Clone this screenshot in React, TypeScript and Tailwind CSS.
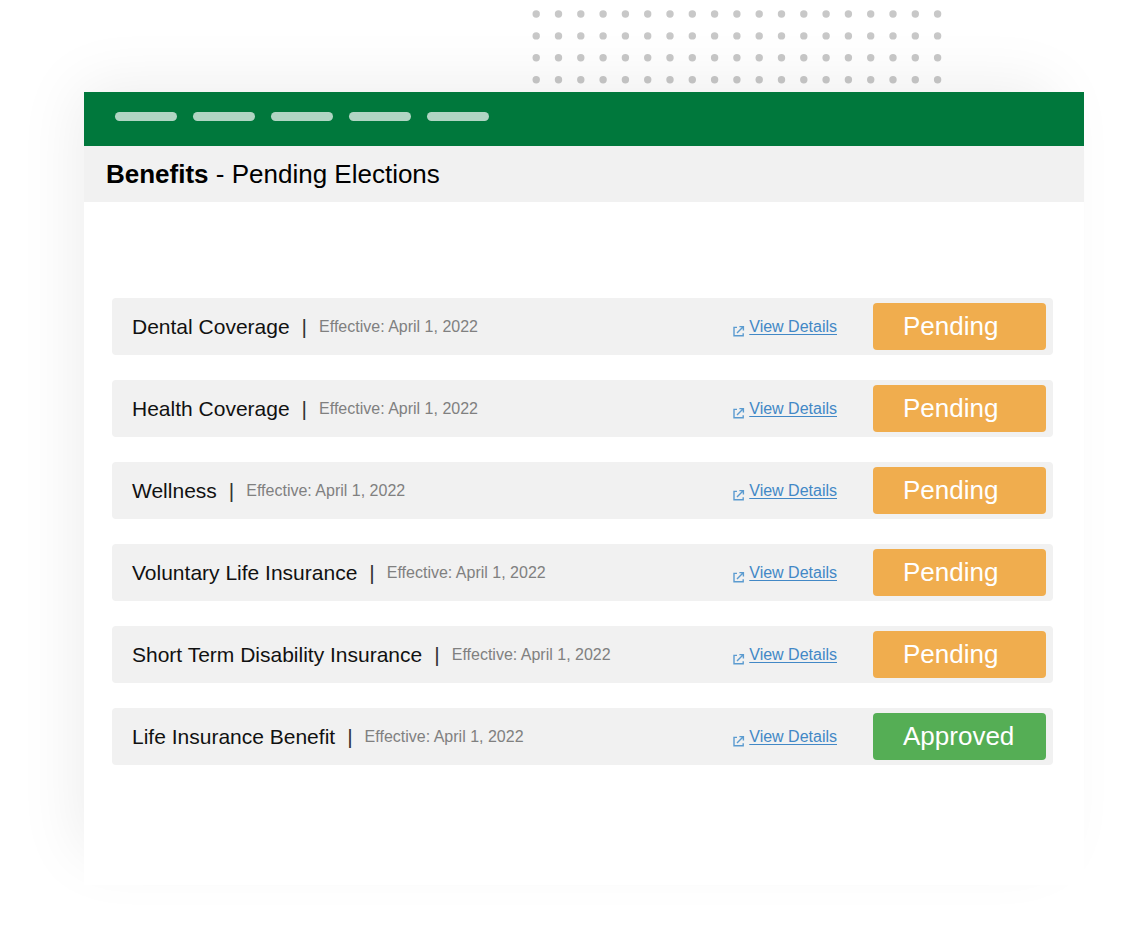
import React from "react";
import clsx from "clsx";

type Election = {
  name: string;
  effective: string;
  status: "Pending" | "Approved";
};

const elections: Election[] = [
  { name: "Dental Coverage", effective: "April 1, 2022", status: "Pending" },
  { name: "Health Coverage", effective: "April 1, 2022", status: "Pending" },
  { name: "Wellness", effective: "April 1, 2022", status: "Pending" },
  { name: "Voluntary Life Insurance", effective: "April 1, 2022", status: "Pending" },
  { name: "Short Term Disability Insurance", effective: "April 1, 2022", status: "Pending" },
  { name: "Life Insurance Benefit", effective: "April 1, 2022", status: "Approved" },
];

const DotGrid = () => (
  <svg width="412" height="92" className="absolute left-[530px] top-0" aria-hidden="true">
    {Array.from({ length: 4 }).map((_, row) =>
      Array.from({ length: 19 }).map((_, col) => (
        <circle
          key={`${row}-${col}`}
          cx={6.2 + col * 22.3}
          cy={14 + row * 21.9}
          r={3.7}
          fill="#c8c8c8"
        />
      ))
    )}
  </svg>
);

const ExternalIcon = () => (
  <svg
    width="12"
    height="12"
    viewBox="0 0 12 12"
    fill="none"
    stroke="#5b9bd0"
    strokeWidth="1.4"
    className="mt-2"
    aria-hidden="true"
  >
    <path d="M4 2.4H1v8.4h9.2V8.2" />
    <path d="M6.4 1.6h4v4M10.2 1.8L4 8" />
  </svg>
);

const ElectionRow = ({ name, effective, status }: Election) => (
  <li className="flex h-[57px] items-center rounded-[4px] bg-[#f1f1f1] pl-5 pr-[7px]">
    <h2 className="text-[21px] text-[#111]">{name}</h2>
    <span className="ml-3 text-[21px] text-[#333]">|</span>
    <p className="ml-3 text-base text-[#808080]">Effective: {effective}</p>
    <a
      href="#details"
      className="ml-auto flex items-center gap-1 text-base text-[#4288c6]"
    >
      <ExternalIcon />
      <span className="underline underline-offset-2">View Details</span>
    </a>
    <div
      className={clsx(
        "ml-9 flex h-[47px] w-[173px] items-center rounded-[4px] pl-[30px] text-[26px] text-white",
        status === "Approved" ? "bg-[#55ae55]" : "bg-[#f0ad4e]"
      )}
    >
      {status}
    </div>
  </li>
);

const App = () => {
  return (
    <div className="relative overflow-hidden bg-white pb-14 pl-[84px] pr-[52px] pt-[92px] font-['Liberation_Sans',Arial,sans-serif]">
      <DotGrid />
      <main className="relative bg-white pb-[120px] shadow-[-18px_-18px_60px_-14px_rgba(0,0,0,0.08)]">
        <div className="flex h-[54px] gap-4 bg-[#00783c] pl-[31px] pt-5">
          {Array.from({ length: 5 }).map((_, i) => (
            <span key={i} className="h-[9px] w-[62px] rounded-full bg-[#b0d5c3]" />
          ))}
        </div>
        <h1 className="flex h-14 items-center whitespace-pre bg-[#f1f1f1] pl-[22px] text-[26px] text-black">
          <b>Benefits</b> - Pending Elections
        </h1>
        <ul className="mt-24 flex flex-col gap-[25px] pl-7 pr-[31px]">
          {elections.map((election) => (
            <ElectionRow key={election.name} {...election} />
          ))}
        </ul>
      </main>
    </div>
  );
};

export default App;
